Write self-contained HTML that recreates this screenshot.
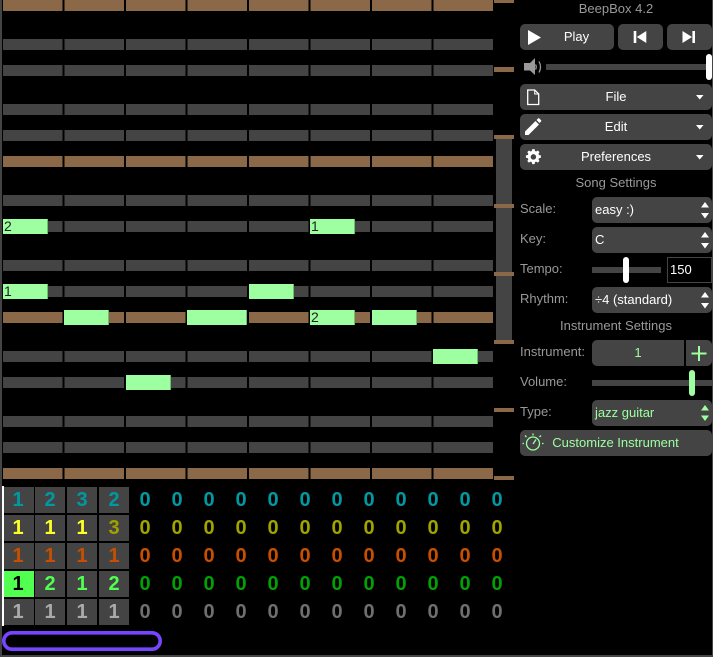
<!DOCTYPE html>
<html><head><meta charset="utf-8"><style>
html,body{margin:0;padding:0;background:#000;}
#p{position:relative;width:713px;height:657px;overflow:hidden;background:#000;font-family:"Liberation Sans",sans-serif;font-size:13px;color:#fff;}
#p div{position:absolute;box-sizing:border-box;}
.b{background:#444;border-radius:5px;text-align:center;height:26px;line-height:25px;font-size:13px;color:#fff;}
.h{color:#999;text-align:center;left:520px;width:192px;height:16px;line-height:16px;font-size:13px;}
.l{color:#999;left:520px;height:16px;line-height:16px;font-size:13px;}
.s{background:#444;border-radius:5px;left:592px;width:120px;height:26px;line-height:26px;padding-left:3px;font-size:13px;color:#fff;}
.g{color:#9dffa0;}
.t{background:#444;height:6px;}
.k{background:#fff;width:6px;height:26px;border-radius:3px;}
.c{width:30px;height:26px;background:#444;}
.d{width:32px;height:26px;text-align:center;line-height:26px;font-size:20px;font-weight:bold;}
svg{position:absolute;left:0;top:0;}
.n{background:#9dffa0;height:15px;box-shadow:inset -1px 0 #6bc06f;color:#222;font-size:14px;line-height:15px;padding-left:1px;}
</style></head><body><div id="p">
<svg width="713" height="657">
<defs><g id="r"><rect x="3" width="59.5" height="11"/><rect x="64.5" width="59.5" height="11"/><rect x="126" width="59.5" height="11"/><rect x="187.5" width="59.5" height="11"/><rect x="249" width="59.5" height="11"/><rect x="310.5" width="59.5" height="11"/><rect x="372" width="59.5" height="11"/><rect x="433.5" width="59.5" height="11"/></g></defs>
<g style="fill:#8a6848"><use href="#r" y="0"/><use href="#r" y="156"/><use href="#r" y="312"/><use href="#r" y="468"/></g>
<g style="fill:#444"><use href="#r" y="39"/><use href="#r" y="65"/><use href="#r" y="104"/><use href="#r" y="130"/><use href="#r" y="195"/><use href="#r" y="221"/><use href="#r" y="260"/><use href="#r" y="286"/><use href="#r" y="351"/><use href="#r" y="377"/><use href="#r" y="416"/><use href="#r" y="442"/></g>
<rect x="496" y="139" width="16" height="201" fill="#444"/>
<g fill="#8a6848"><rect x="494" y="0" width="20" height="3"/><rect x="494" y="67" width="20" height="5"/><rect x="494" y="135" width="20" height="4"/><rect x="494" y="204" width="20" height="4"/><rect x="494" y="272" width="20" height="4"/><rect x="494" y="340" width="20" height="4"/><rect x="494" y="408" width="20" height="4"/><rect x="494" y="476" width="20" height="4"/></g>
<rect x="0" y="0" width="2" height="657" fill="#444"/><rect x="0" y="655" width="713" height="2" fill="#444"/><rect x="712" y="0" width="1" height="657" fill="#444"/>
<rect x="2" y="486" width="2" height="140" fill="#fff"/>
<rect x="3.800" y="632.800" width="156.400" height="16.400" rx="8.200" fill="none" stroke="#7744ff" stroke-width="3.600"/>
</svg>
<div class="n" style="left:3px;top:219px;width:44.500px;">2</div>
<div class="n" style="left:310px;top:219px;width:45px;">1</div>
<div class="n" style="left:3px;top:284px;width:44.500px;">1</div>
<div class="n" style="left:249px;top:284px;width:45px;"></div>
<div class="n" style="left:64px;top:310px;width:45px;"></div>
<div class="n" style="left:187px;top:310px;width:60px;"></div>
<div class="n" style="left:310px;top:310px;width:45px;">2</div>
<div class="n" style="left:372px;top:310px;width:45px;"></div>
<div class="n" style="left:433px;top:349px;width:45px;"></div>
<div class="n" style="left:126px;top:375px;width:45px;"></div>

<div class="h" style="top:1px;left:520px;">BeepBox 4.2</div>
<div class="b" style="left:520px;top:24px;width:94px;padding-left:19px;">Play</div>
<div class="b" style="left:618px;top:24px;width:45px;"></div>
<div class="b" style="left:667px;top:24px;width:45px;"></div>
<div class="t" style="left:546px;top:64px;width:162px;"></div>
<div class="k" style="left:706px;top:54px;"></div>
<div class="b" style="left:520px;top:84px;width:192px;">File</div>
<div class="b" style="left:520px;top:114px;width:192px;">Edit</div>
<div class="b" style="left:520px;top:144px;width:192px;">Preferences</div>
<div class="h" style="top:175px;">Song Settings</div>
<div class="l" style="top:201px;">Scale:</div><div class="s" style="top:197px;">easy :)</div>
<div class="l" style="top:231px;">Key:</div><div class="s" style="top:227px;">C</div>
<div class="l" style="top:261px;">Tempo:</div>
<div class="t" style="left:592px;top:267px;width:69px;"></div><div class="k" style="left:623px;top:257px;"></div>
<div style="left:667px;top:257px;width:45px;height:26px;border:1px solid #444;line-height:24px;padding-left:2px;font-size:13px;color:#fff;">150</div>
<div class="l" style="top:291px;">Rhythm:</div><div class="s" style="top:287px;">÷4 (standard)</div>
<div class="h" style="top:318px;">Instrument Settings</div>
<div class="l" style="top:344px;">Instrument:</div>
<div class="b g" style="left:592px;top:340px;width:92px;border-radius:5px 0 0 5px;">1</div>
<div class="b" style="left:686px;top:340px;width:26px;border-radius:0 5px 5px 0;"></div>
<div class="l" style="top:374px;">Volume:</div>
<div class="t" style="left:592px;top:380px;width:121px;"></div><div class="k" style="left:689px;top:370px;background:#9dffa0;"></div>
<div class="l" style="top:404px;">Type:</div><div class="s g" style="top:400px;color:#9dffa0;">jazz guitar</div>
<div class="b g" style="left:520px;top:430px;width:192px;padding-right:1px;">Customize Instrument</div>
<svg width="713" height="657">
<path d="M528 30v15l13-7.500z" fill="#fff"/>
<path d="M633.700 31h2.600v12h-2.600zM646.300 31v12l-9.500-6z" fill="#fff"/>
<path d="M695 31h-2.600v12h2.600zM682.500 31v12l9.500-6z" fill="#fff"/>
<path d="M524 63h6l5-5v17l-5-4.500h-6z" fill="#999"/>
<path d="M535.500 64.500q1.500 2.500 0 5M539 61.500q3 5.500 0 11" stroke="#999" stroke-width="1.300" fill="none"/>
<path d="M527.700 90h7l4 4v10.500h-11z" fill="none" stroke="#fff" stroke-width="1.300"/><path d="M534.700 90v4h4" fill="none" stroke="#fff" stroke-width="1"/>
<path d="M696 95h7.500l-3.750 4.500zM696 125h7.500l-3.750 4.500zM696 155h7.500l-3.750 4.500z" fill="#fff"/>
<path d="M525 135v-3.500l10.500-10.500 3.500 3.500-10.500 10.500zM536.500 120l1.500-1.500q.7-.7 1.400 0l1.600 1.600q.7.700 0 1.400l-1.500 1.500z" fill="#fff"/>
<g transform="translate(533.400,157.300) scale(.78) translate(-534.500,-157.500)"><path d="M533 147l3 0 .6 2.500 1.400.6 2.200-1.300 2.100 2.100-1.300 2.200.6 1.400 2.500.6v3l-2.500.6-.6 1.400 1.300 2.200-2.100 2.100-2.200-1.300-1.400.6-.6 2.500h-3l-.6-2.500-1.400-.6-2.200 1.300-2.100-2.100 1.300-2.200-.6-1.400-2.500-.6v-3l2.500-.6.6-1.400-1.300-2.200 2.100-2.100 2.200 1.300 1.400-.6z" fill="#fff"/><circle cx="534.500" cy="157" r="3.500" fill="#444"/></g>
<path d="M705 202l-4 5.500h8zM705 218.500l-4-5.500h8zM705 232l-4 5.500h8zM705 248.500l-4-5.500h8zM705 292l-4 5.500h8zM705 308.500l-4-5.500h8z" fill="#fff"/>
<path d="M705 405l-4 5.500h8zM705 421l-4-5.500h8z" fill="#9dffa0"/>
<path d="M699 346v15M691.500 353.500h15" stroke="#9dffa0" stroke-width="2" fill="none"/>
<circle cx="533" cy="443.500" r="6.500" fill="none" stroke="#9dffa0" stroke-width="1.300"/>
<path d="M533 444l3-4.500M533 433.500v2M524 443.500h-1.500M543.500 443.500h-1.500M526.500 437l-1.500-1.500M539.500 437l1.500-1.500" stroke="#9dffa0" stroke-width="1.300" fill="none"/>
</svg>

<div class="c" style="left:4px;top:487px;"></div><div class="c" style="left:35px;top:487px;"></div><div class="c" style="left:67px;top:487px;"></div><div class="c" style="left:99px;top:487px;"></div>
<div class="c" style="left:4px;top:515px;"></div><div class="c" style="left:35px;top:515px;"></div><div class="c" style="left:67px;top:515px;"></div><div class="c" style="left:99px;top:515px;"></div>
<div class="c" style="left:4px;top:543px;"></div><div class="c" style="left:35px;top:543px;"></div><div class="c" style="left:67px;top:543px;"></div><div class="c" style="left:99px;top:543px;"></div>
<div class="c" style="left:4px;top:571px;background:#50ff50;"></div><div class="c" style="left:35px;top:571px;"></div><div class="c" style="left:67px;top:571px;"></div><div class="c" style="left:99px;top:571px;"></div>
<div class="c" style="left:4px;top:599px;"></div><div class="c" style="left:35px;top:599px;"></div><div class="c" style="left:67px;top:599px;"></div><div class="c" style="left:99px;top:599px;"></div>

<div class="d" style="left:2px;top:487px;color:#0099a1;">1</div><div class="d" style="left:34px;top:487px;color:#0099a1;">2</div><div class="d" style="left:66px;top:487px;color:#0099a1;">3</div><div class="d" style="left:98px;top:487px;color:#0099a1;">2</div>
<div class="d" style="left:2px;top:515px;color:#ffff25;">1</div><div class="d" style="left:34px;top:515px;color:#ffff25;">1</div><div class="d" style="left:66px;top:515px;color:#ffff25;">1</div><div class="d" style="left:98px;top:515px;color:#a1a100;">3</div>
<div class="d" style="left:2px;top:543px;color:#c75000;">1</div><div class="d" style="left:34px;top:543px;color:#c75000;">1</div><div class="d" style="left:66px;top:543px;color:#c75000;">1</div><div class="d" style="left:98px;top:543px;color:#c75000;">1</div>
<div class="d" style="left:2px;top:571px;color:#000;">1</div><div class="d" style="left:34px;top:571px;color:#50ff50;">2</div><div class="d" style="left:66px;top:571px;color:#50ff50;">1</div><div class="d" style="left:98px;top:571px;color:#50ff50;">2</div>
<div class="d" style="left:2px;top:599px;color:#aaa;">1</div><div class="d" style="left:34px;top:599px;color:#aaa;">1</div><div class="d" style="left:66px;top:599px;color:#aaa;">1</div><div class="d" style="left:98px;top:599px;color:#aaa;">1</div>

<div class="d" style="left:129px;top:487px;color:#0099a1;">0</div><div class="d" style="left:161px;top:487px;color:#0099a1;">0</div><div class="d" style="left:193px;top:487px;color:#0099a1;">0</div><div class="d" style="left:225px;top:487px;color:#0099a1;">0</div><div class="d" style="left:257px;top:487px;color:#0099a1;">0</div><div class="d" style="left:289px;top:487px;color:#0099a1;">0</div><div class="d" style="left:321px;top:487px;color:#0099a1;">0</div><div class="d" style="left:353px;top:487px;color:#0099a1;">0</div><div class="d" style="left:385px;top:487px;color:#0099a1;">0</div><div class="d" style="left:417px;top:487px;color:#0099a1;">0</div><div class="d" style="left:449px;top:487px;color:#0099a1;">0</div><div class="d" style="left:481px;top:487px;color:#0099a1;">0</div>
<div class="d" style="left:129px;top:515px;color:#a1a100;">0</div><div class="d" style="left:161px;top:515px;color:#a1a100;">0</div><div class="d" style="left:193px;top:515px;color:#a1a100;">0</div><div class="d" style="left:225px;top:515px;color:#a1a100;">0</div><div class="d" style="left:257px;top:515px;color:#a1a100;">0</div><div class="d" style="left:289px;top:515px;color:#a1a100;">0</div><div class="d" style="left:321px;top:515px;color:#a1a100;">0</div><div class="d" style="left:353px;top:515px;color:#a1a100;">0</div><div class="d" style="left:385px;top:515px;color:#a1a100;">0</div><div class="d" style="left:417px;top:515px;color:#a1a100;">0</div><div class="d" style="left:449px;top:515px;color:#a1a100;">0</div><div class="d" style="left:481px;top:515px;color:#a1a100;">0</div>
<div class="d" style="left:129px;top:543px;color:#c75000;">0</div><div class="d" style="left:161px;top:543px;color:#c75000;">0</div><div class="d" style="left:193px;top:543px;color:#c75000;">0</div><div class="d" style="left:225px;top:543px;color:#c75000;">0</div><div class="d" style="left:257px;top:543px;color:#c75000;">0</div><div class="d" style="left:289px;top:543px;color:#c75000;">0</div><div class="d" style="left:321px;top:543px;color:#c75000;">0</div><div class="d" style="left:353px;top:543px;color:#c75000;">0</div><div class="d" style="left:385px;top:543px;color:#c75000;">0</div><div class="d" style="left:417px;top:543px;color:#c75000;">0</div><div class="d" style="left:449px;top:543px;color:#c75000;">0</div><div class="d" style="left:481px;top:543px;color:#c75000;">0</div>
<div class="d" style="left:129px;top:571px;color:#00a100;">0</div><div class="d" style="left:161px;top:571px;color:#00a100;">0</div><div class="d" style="left:193px;top:571px;color:#00a100;">0</div><div class="d" style="left:225px;top:571px;color:#00a100;">0</div><div class="d" style="left:257px;top:571px;color:#00a100;">0</div><div class="d" style="left:289px;top:571px;color:#00a100;">0</div><div class="d" style="left:321px;top:571px;color:#00a100;">0</div><div class="d" style="left:353px;top:571px;color:#00a100;">0</div><div class="d" style="left:385px;top:571px;color:#00a100;">0</div><div class="d" style="left:417px;top:571px;color:#00a100;">0</div><div class="d" style="left:449px;top:571px;color:#00a100;">0</div><div class="d" style="left:481px;top:571px;color:#00a100;">0</div>
<div class="d" style="left:129px;top:599px;color:#6f6f6f;">0</div><div class="d" style="left:161px;top:599px;color:#6f6f6f;">0</div><div class="d" style="left:193px;top:599px;color:#6f6f6f;">0</div><div class="d" style="left:225px;top:599px;color:#6f6f6f;">0</div><div class="d" style="left:257px;top:599px;color:#6f6f6f;">0</div><div class="d" style="left:289px;top:599px;color:#6f6f6f;">0</div><div class="d" style="left:321px;top:599px;color:#6f6f6f;">0</div><div class="d" style="left:353px;top:599px;color:#6f6f6f;">0</div><div class="d" style="left:385px;top:599px;color:#6f6f6f;">0</div><div class="d" style="left:417px;top:599px;color:#6f6f6f;">0</div><div class="d" style="left:449px;top:599px;color:#6f6f6f;">0</div><div class="d" style="left:481px;top:599px;color:#6f6f6f;">0</div>
</div></body></html>
